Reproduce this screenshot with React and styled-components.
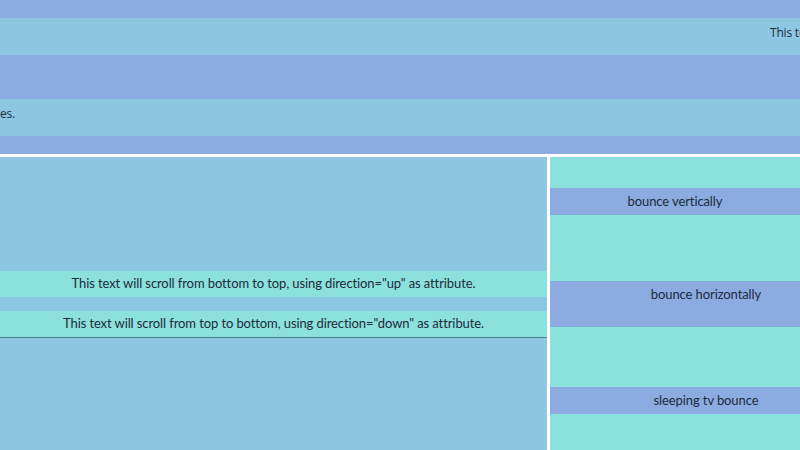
import React from 'react'
import styled, { createGlobalStyle } from 'styled-components'

const GlobalStyle = createGlobalStyle`
  html, body {
    margin: 0;
    padding: 0;
    background: #fff;
  }
  body {
    font-family: Lato, 'Noto Sans', sans-serif;
    color: #1c2b3c;
  }
`

const colors = {
  purple: '#8babe1',
  blue: '#8dc7e1',
  cyan: '#8ce1dd'
}

const Page = styled.div`
  width: 800px;
  height: 450px;
  display: flex;
  flex-direction: column;
  gap: 3px;
  background: #fff;
  overflow: hidden;
`

const Top = styled.section`
  display: flex;
  flex-direction: column;
  height: 154px;
  flex-shrink: 0;
`

const Stripe = styled.div`
  height: ${p => p.h}px;
  flex-shrink: 0;
  background: ${p => colors[p.tone]};
  display: flex;
  align-items: center;
  padding-bottom: ${p => (p.lift ? 8 : 0)}px;
  box-sizing: border-box;
  overflow: hidden;
  white-space: nowrap;
`

const TopText = styled.span`
  font-family: 'Open Sans', 'Noto Sans', sans-serif;
  font-size: 12px;
  letter-spacing: -0.2px;
  color: #1d2a3f;
  flex-shrink: 0;
`

const Bottom = styled.section`
  flex: 1;
  display: grid;
  grid-template-columns: 547px 1fr;
  gap: 3px;
`

const Panel = styled.div`
  display: flex;
  flex-direction: column;
  background: ${p => colors[p.tone]};
  overflow: hidden;
`

const Band = styled.div`
  height: ${p => p.h}px;
  flex-shrink: 0;
  background: ${p => colors[p.tone]};
  display: flex;
  align-items: ${p => (p.top ? 'flex-start' : 'center')};
  justify-content: center;
  padding-top: ${p => (p.top ? 5 : 0)}px;
  padding-bottom: ${p => (p.top ? 0 : 2)}px;
  box-sizing: border-box;
  border-bottom: ${p => (p.line ? '1px solid #4f7f8a' : 'none')};
`

const Label = styled.span`
  font-family: Lato, 'Noto Sans', sans-serif;
  font-size: 13px;
  letter-spacing: -0.1px;
  color: #1c2b3c;
  white-space: nowrap;
`

const Spacer = styled.div`
  height: ${p => p.h}px;
  flex-shrink: 0;
`

const App = () => {
  return (
    <>
      <GlobalStyle />
      <Page>
        <Top>
          <Stripe tone='purple' h={18} />
          <Stripe tone='blue' h={37} lift>
            <TopText style={{ transform: 'translateX(770px)' }}>
              This text will scroll from right to left, using the default settings.
            </TopText>
          </Stripe>
          <Stripe tone='purple' h={44} />
          <Stripe tone='blue' h={37} lift>
            <TopText style={{ transform: 'translateX(calc(-100% + 15px))' }}>
              This text will bounce from left to right inside its boundaries.
            </TopText>
          </Stripe>
          <Stripe tone='purple' h={18} />
        </Top>
        <Bottom>
          <Panel tone='blue'>
            <Spacer h={114} />
            <Band tone='cyan' h={26}>
              <Label>This text will scroll from bottom to top, using direction="up" as attribute.</Label>
            </Band>
            <Spacer h={14} />
            <Band tone='cyan' h={27} line>
              <Label>This text will scroll from top to bottom, using direction="down" as attribute.</Label>
            </Band>
          </Panel>
          <Panel tone='cyan'>
            <Spacer h={31} />
            <Band tone='purple' h={27}>
              <Label>bounce vertically</Label>
            </Band>
            <Spacer h={66} />
            <Band tone='purple' h={46} top>
              <Label style={{ transform: 'translateX(31px)' }}>bounce horizontally</Label>
            </Band>
            <Spacer h={60} />
            <Band tone='purple' h={27}>
              <Label style={{ transform: 'translateX(31px)' }}>sleeping tv bounce</Label>
            </Band>
          </Panel>
        </Bottom>
      </Page>
    </>
  )
}

export default App
